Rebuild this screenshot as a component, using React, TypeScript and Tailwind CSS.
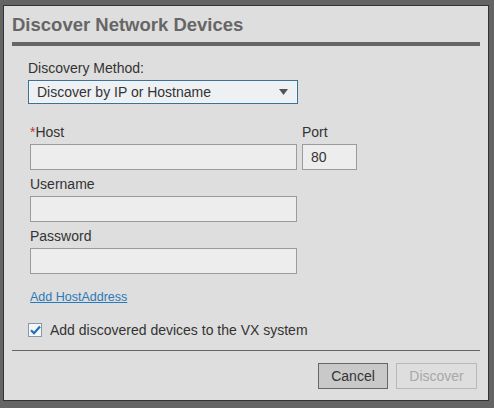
const font = { fontFamily: '"Liberation Sans", Arial, sans-serif' };

function Field({
  label,
  required,
  className = "",
}: {
  label: string;
  required?: boolean;
  className?: string;
}) {
  return (
    <div className={className}>
      <div className="h-[16px] text-[14px] leading-[16px] text-[#333]">
        {required && <span className="text-[#c0392b]">*</span>}
        {label}
      </div>
      <input
        type="text"
        className="mt-[4px] block h-[26px] w-[267px] border border-[#9b9b9b] bg-[#ededed] px-[8px] text-[14px] text-[#333] outline-none"
      />
    </div>
  );
}

export default function App() {
  return (
    <div className="h-[408px] w-[494px] overflow-hidden bg-[#646464] pl-[3px] pt-[5px]" style={font}>
      <div className="h-[396px] w-[486px] border border-[#333] bg-[#dedede]">
        {/* Title */}
        <div className="ml-[8px] mt-[8px] h-[22px] text-[18.5px] font-bold leading-[22px] text-[#666]">
          Discover Network Devices
        </div>
        <div className="ml-[8px] mt-[6px] h-[4px] w-[468px] bg-[#666]" />

        {/* Form */}
        <div className="ml-[24px] mt-[14px] h-[16px] text-[14px] leading-[16px] text-[#333]">
          Discovery Method:
        </div>
        <div className="ml-[24px] mt-[4px] flex h-[24px] w-[270px] items-center justify-between border border-[#3b7099] bg-[#eef1f3] pl-[8px] pr-[9px] text-[14px] text-[#333] shadow-[inset_0_0_2px_rgba(255,255,255,0.9)]">
          <span>Discover by IP or Hostname</span>
          <svg width="9" height="6" viewBox="0 0 9 6">
            <path d="M0 0h9L4.5 6z" fill="#555" />
          </svg>
        </div>

        <div className="ml-[26px] mt-[20px] flex gap-[5px]">
          <Field label="Host" required />
          <div>
            <div className="h-[16px] text-[14px] leading-[16px] text-[#333]">Port</div>
            <input
              type="text"
              defaultValue="80"
              className="mt-[4px] block h-[26px] w-[55px] border border-[#9b9b9b] bg-[#ededed] px-[8px] text-[14px] text-[#333] outline-none"
            />
          </div>
        </div>
        <Field label="Username" className="ml-[26px] mt-[6px]" />
        <Field label="Password" className="ml-[26px] mt-[6px]" />

        <a
          href="#"
          className="ml-[26px] mt-[16px] block h-[14px] w-fit text-[12.5px] leading-[14px] text-[#2a7ab8] underline"
        >
          Add HostAddress
        </a>

        <label className="ml-[24px] mt-[18px] flex h-[16px] items-center gap-[8px] text-[14px] leading-[16px] text-[#333]">
          <span className="flex h-[14px] w-[14px] items-center justify-center border border-[#8a98a6] bg-[#f4f6f8]">
            <svg width="11" height="10" viewBox="0 0 11 10">
              <path d="M1 5.2l3 3L10 1.5" fill="none" stroke="#1e6fb8" strokeWidth="2.2" />
            </svg>
          </span>
          Add discovered devices to the VX system
        </label>

        <div className="ml-[8px] mt-[12px] h-px w-[468px] bg-[#666]" />

        <div className="mr-[11px] mt-[12px] flex justify-end gap-[8px]">
          <button className="h-[26px] w-[70px] border border-[#666] bg-[#c9c9c9] text-[14px] text-[#333]">
            Cancel
          </button>
          <button className="h-[26px] w-[81px] border border-[#b8b8b8] bg-[#dedede] text-[14px] text-[#a8a8a8]">
            Discover
          </button>
        </div>
      </div>
    </div>
  );
}
